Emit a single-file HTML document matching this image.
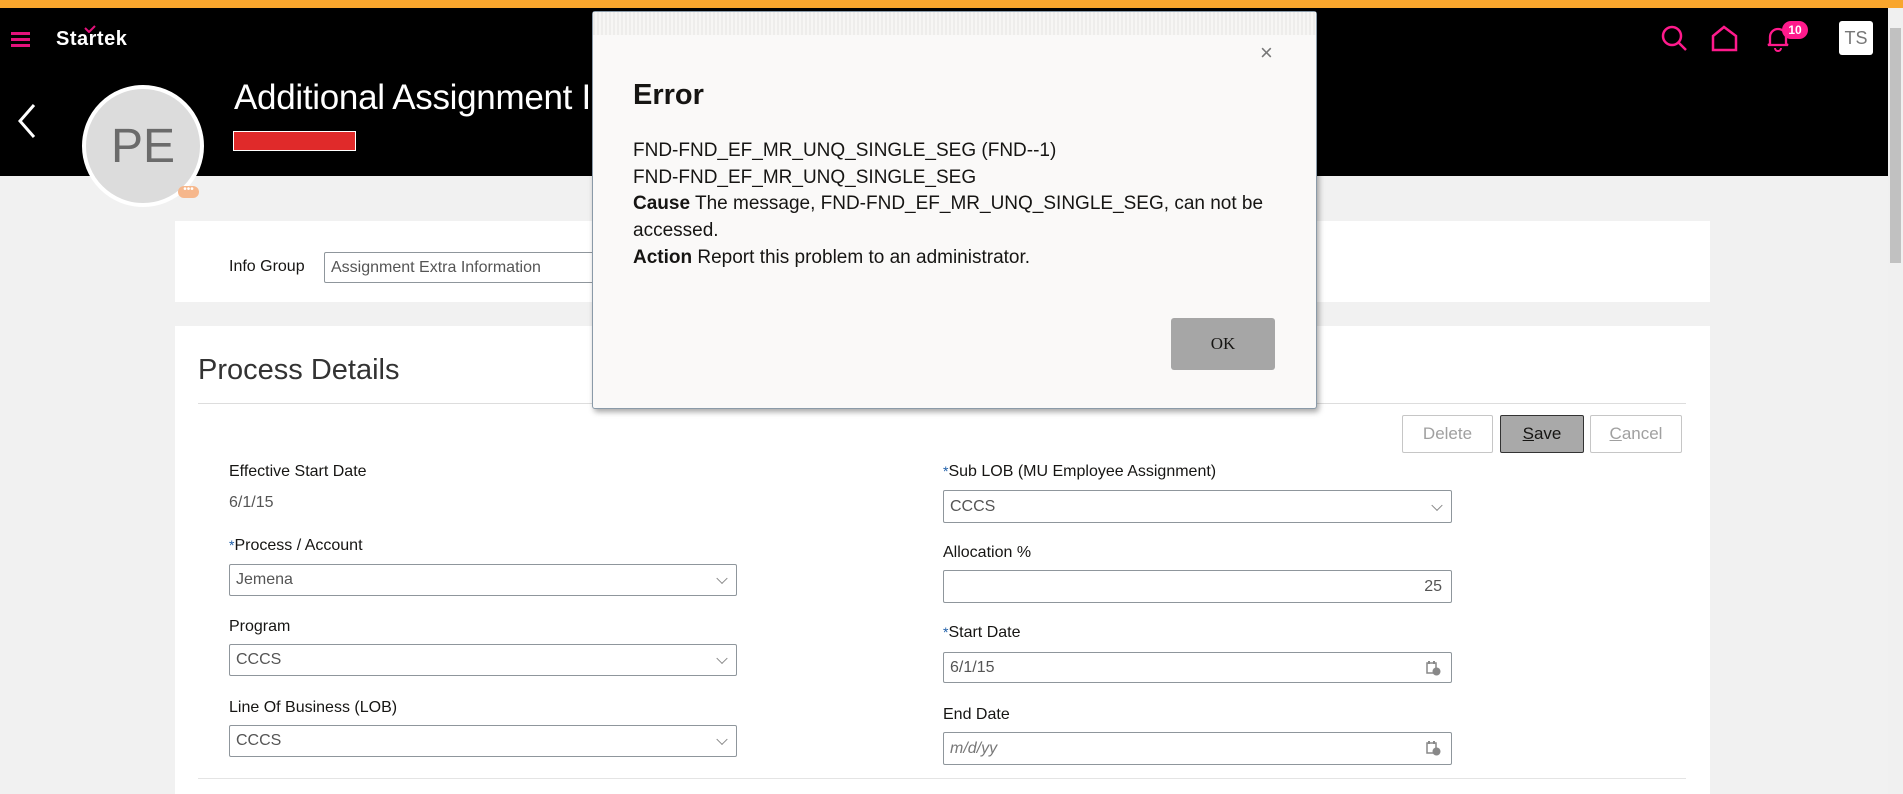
<!DOCTYPE html>
<html><head><meta charset="utf-8"><style>
*{box-sizing:border-box;margin:0;padding:0}
body{width:1903px;height:794px;overflow:hidden;background:#f1f1f1;font-family:"Liberation Sans",sans-serif;position:relative;color:#161513}
.a{position:absolute}
.lbl{position:absolute;font-size:16px;color:#161513}
.lbl b{color:#1e5ea8;font-weight:normal;font-size:14px;vertical-align:top}
.inp{position:absolute;border:1px solid #8f969c;border-radius:2px;background:#fff;font-size:16px;color:#555;padding-left:6px;display:flex;align-items:center}
.chev{position:absolute;right:10px;top:50%;width:8px;height:8px;border-right:1.5px solid #888;border-bottom:1.5px solid #888;transform:translateY(-70%) rotate(45deg)}
.cal{position:absolute;right:10px;top:7px;width:15px;height:16px}
.btn{position:absolute;border:1px solid #c6c6c6;border-radius:2px;background:#fff;color:#a0a0a0;font-size:17px;display:flex;align-items:center;justify-content:center}
</style></head><body>
<div class="a" style="left:0;top:0;width:1903px;height:8px;background:#f9a62d"></div>
<div class="a" style="left:0;top:8px;width:1888px;height:168px;background:#000"></div>
<div class="a" style="left:1888px;top:8px;width:15px;height:786px;background:#f0f0f0"></div>
<div class="a" style="left:1890px;top:28px;width:11px;height:235px;background:#c1c1c1"></div>
<div class="a" style="left:11px;top:32px;width:19px;height:3px;background:#e4127c"></div>
<div class="a" style="left:11px;top:38px;width:19px;height:3px;background:#e4127c"></div>
<div class="a" style="left:11px;top:44px;width:19px;height:3px;background:#e4127c"></div>
<div class="a" style="left:56px;top:28px;color:#fff;font-size:20px;font-weight:bold;letter-spacing:0.5px">Startek</div>
<svg class="a" style="left:84px;top:25px" width="12" height="8"><path d="M1 3 L5 7 L11 1" stroke="#e4127c" stroke-width="2" fill="none"/></svg>
<svg class="a" style="left:16px;top:103px" width="22" height="36"><path d="M18 2 L4 18 L18 34" stroke="#fff" stroke-width="3" fill="none"/></svg>
<div class="a" style="left:82px;top:85px;width:122px;height:122px;border-radius:50%;background:#dcdcdc;border:4px solid #fff;display:flex;align-items:center;justify-content:center;font-size:48px;color:#6b6b6b">PE</div>
<div class="a" style="left:178px;top:186px;width:21px;height:12px;border-radius:6px;background:#f6b78c;color:#fff;font-size:10px;line-height:8px;text-align:center">•••</div>
<div class="a" style="left:234px;top:78px;color:#fff;font-size:35px;font-weight:300;white-space:nowrap;letter-spacing:-0.3px">Additional Assignment I</div>
<div class="a" style="left:233px;top:131px;width:123px;height:20px;background:#e02a2a;border:1px solid #fff"></div>
<svg class="a" style="left:1660px;top:24px" width="30" height="30"><circle cx="12" cy="12" r="9" stroke="#ff1a8c" stroke-width="2.5" fill="none"/><path d="M18.5 18.5 L26 26" stroke="#ff1a8c" stroke-width="2.5"/></svg>
<svg class="a" style="left:1711px;top:24px" width="28" height="28"><path d="M2 12 L13 3 L25 12 L25 26 L2 26 Z" stroke="#ff1a8c" stroke-width="2.5" fill="none"/></svg>
<svg class="a" style="left:1765px;top:25px" width="26" height="28"><path d="M5 19 L5 12 A8 8 0 0 1 21 12 L21 19 L23 20 L3 20 Z" stroke="#ff1a8c" stroke-width="2.3" fill="none"/><path d="M10 23 A3 3 0 0 0 16 23" stroke="#ff1a8c" stroke-width="2" fill="none"/></svg>
<div class="a" style="left:1782px;top:21px;width:26px;height:18px;border-radius:9px;background:#ff1a8c;color:#fff;font-size:12px;font-weight:bold;text-align:center;line-height:18px">10</div>
<div class="a" style="left:1839px;top:21px;width:34px;height:34px;background:#fff;border-radius:3px;color:#777;font-size:18px;text-align:center;line-height:34px">TS</div>
<div class="a" style="left:175px;top:221px;width:1535px;height:81px;background:#fff"></div>
<div class="lbl" style="left:229px;top:258px">Info Group</div>
<div class="inp" style="left:324px;top:252px;width:280px;height:31px">Assignment Extra Information</div>
<div class="a" style="left:175px;top:326px;width:1535px;height:468px;background:#fff"></div>
<div class="a" style="left:198px;top:354px;font-size:29px;font-weight:300;color:#333">Process Details</div>
<div class="a" style="left:198px;top:403px;width:1488px;height:1px;background:#ddd"></div>
<div class="a" style="left:198px;top:778px;width:1488px;height:1px;background:#e4e4e4"></div>
<div class="btn" style="left:1402px;top:415px;width:91px;height:38px">Delete</div>
<div class="btn" style="left:1500px;top:415px;width:84px;height:38px;background:#a9a9a9;border-color:#333;color:#161513"><u>S</u>ave</div>
<div class="btn" style="left:1590px;top:415px;width:92px;height:38px"><u>C</u>ancel</div>
<div class="lbl" style="left:229px;top:463px">Effective Start Date</div>
<div class="a" style="left:229px;top:494px;font-size:16px;color:#555">6/1/15</div>
<div class="lbl" style="left:229px;top:537px"><b>*</b>Process / Account</div>
<div class="inp" style="left:229px;top:564px;width:508px;height:32px">Jemena<span class="chev"></span></div>
<div class="lbl" style="left:229px;top:618px">Program</div>
<div class="inp" style="left:229px;top:644px;width:508px;height:32px">CCCS<span class="chev"></span></div>
<div class="lbl" style="left:229px;top:699px">Line Of Business (LOB)</div>
<div class="inp" style="left:229px;top:725px;width:508px;height:32px">CCCS<span class="chev"></span></div>
<div class="lbl" style="left:943px;top:463px"><b>*</b>Sub LOB (MU Employee Assignment)</div>
<div class="inp" style="left:943px;top:490px;width:509px;height:33px">CCCS<span class="chev"></span></div>
<div class="lbl" style="left:943px;top:544px">Allocation %</div>
<div class="inp" style="left:943px;top:570px;width:509px;height:33px;justify-content:flex-end;padding-right:9px">25</div>
<div class="lbl" style="left:943px;top:624px"><b>*</b>Start Date</div>
<div class="inp" style="left:943px;top:652px;width:509px;height:31px">6/1/15<svg class="cal" viewBox="0 0 15 16"><rect x="1" y="3" width="9" height="10" fill="none" stroke="#888" stroke-width="1.5"/><rect x="2" y="1" width="2" height="3" fill="#888"/><rect x="7" y="1" width="2" height="3" fill="#888"/><circle cx="10.5" cy="11.5" r="4" fill="#888"/></svg></div>
<div class="lbl" style="left:943px;top:706px">End Date</div>
<div class="inp" style="left:943px;top:732px;width:509px;height:33px;font-style:italic;color:#777">m/d/yy<svg class="cal" viewBox="0 0 15 16"><rect x="1" y="3" width="9" height="10" fill="none" stroke="#888" stroke-width="1.5"/><rect x="2" y="1" width="2" height="3" fill="#888"/><rect x="7" y="1" width="2" height="3" fill="#888"/><circle cx="10.5" cy="11.5" r="4" fill="#888"/></svg></div>
<div class="a" style="left:592px;top:11px;width:725px;height:398px;background:#faf9f8;border:1px solid #8a9aa8;border-radius:3px;box-shadow:2px 3px 6px rgba(0,0,0,0.35)">
  <div class="a" style="left:0;top:0;width:723px;height:23px;background:repeating-linear-gradient(90deg,#eeedeb 0 2px,#f7f6f4 2px 4px)"></div>
  <div class="a" style="left:667px;top:28px;font-size:22px;color:#777">×</div>
  <div class="a" style="left:40px;top:67px;font-size:29px;font-weight:900;color:#161513">Error</div>
  <div class="a" style="left:40px;top:126px;font-size:19px;line-height:26.7px;color:#161513;width:680px;white-space:nowrap">FND-FND_EF_MR_UNQ_SINGLE_SEG (FND--1)<br>FND-FND_EF_MR_UNQ_SINGLE_SEG<br><b>Cause</b> The message, FND-FND_EF_MR_UNQ_SINGLE_SEG, can not be<br>accessed.<br><b>Action</b> Report this problem to an administrator.</div>
  <div class="a" style="left:578px;top:306px;width:104px;height:52px;background:#a6a6a6;border-radius:3px;font-family:'Liberation Serif',serif;font-size:17px;color:#161513;text-align:center;line-height:52px">OK</div>
</div>
</body></html>
